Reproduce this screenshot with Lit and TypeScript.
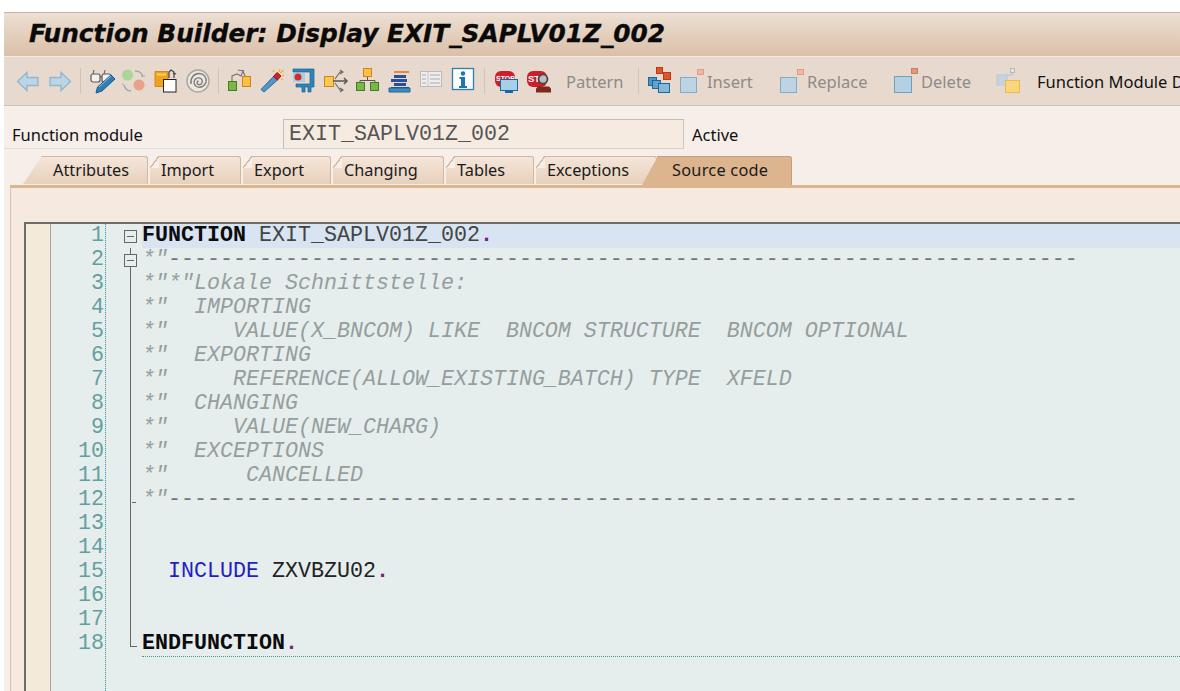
import { LitElement, html, css, svg } from "lit";
import { customElement } from "lit/decorators.js";

const ic = (body: unknown) => html`<svg class="ic" width="24" height="24" viewBox="0 0 24 24">${body}</svg>`;

const sq = (x: number, y: number, w: number, h: number, f: string, s: string) =>
  svg`<rect x=${x + 0.5} y=${y + 0.5} width=${w} height=${h} fill=${f} stroke=${s}/>`;

const icons = {
  back: svg`<path d="M1.500 12.500 11 3.500v5h11v8H11v5z" fill="#bcd5e6" stroke="#93b7d0" stroke-width="1.400"/>`,
  fwd: svg`<path d="M22.500 12.500 13 3.500v5H2v8h11v5z" fill="#bcd5e6" stroke="#93b7d0" stroke-width="1.400"/>`,
  glasses: svg`<g fill="#f4efe9" stroke="#5a5a58" stroke-width="1.200"><rect x="1" y="5" width="9" height="8" rx="2"/><rect x="12" y="5" width="9" height="8" rx="2"/></g><path d="M3 5 4 1M14 5l1-4M10 8h2" stroke="#5a5a58" fill="none"/><path d="M6 24l1.500-6L21 6l4 4L12 22z" fill="#2f7db5" stroke="#1c5a8c"/><path d="M9 18l12-11" stroke="#8cc4ea"/>`,
  states: svg`<circle cx="5.500" cy="6" r="5.500" fill="#aad49b"/><circle cx="17" cy="16" r="5.500" fill="#e9a08c"/><path d="M13 2c4 0 7 2 8 6M9 22c-4 0-6-2-7-6" fill="none" stroke="#a8a8a4" stroke-width="1.400"/><path d="M19 7h4M0 15l3 2" stroke="#a8a8a4"/>`,
  copy: svg`<path d="M1 2.500h13v15H1z" fill="#f0a21d" stroke="#d98a16"/><path d="M3 4.500h9v2H3z" fill="#f8d26c"/><rect x="9.500" y="10.500" width="12.500" height="12.500" fill="#fff" stroke="#222"/><path d="M15 9V3l2-2 3 2v6M19 4l3 1" fill="none" stroke="#444" stroke-width="1.200"/>`,
  spiral: svg`<circle cx="12" cy="12" r="11" fill="#efe6de" stroke="#a9a8a4" stroke-width="1.500"/><path d="M5 15C4 9 8 4.500 13 4.500c5 0 8 4 7 8.500-1 4-5 6-8.500 5C8 17 7 13 9 10.500c2-2.500 6-2 7 .5 1 3-1 5-3.500 4.500-2-.5-2-3 0-3.500" fill="none" stroke="#777" stroke-width="1.300"/>`,
  flow: svg`<path d="M4 12V7l5-2 4 2 2-5 2 5M10 1l6 1" fill="none" stroke="#777" stroke-width="1.200"/>${sq(0, 12, 8, 9, "#7ab648", "#3f7f22")}${sq(14, 7, 8, 10, "#f6c342", "#db7b1b")}`,
  wand: svg`<path d="M1 20.500 14 7l4 3.500L4 23z" fill="#5596c6" stroke="#2a6a9b"/><path d="M13.500 7.500l3.500-4 4 3.500-3.500 4z" fill="#d0202e" stroke="#8d1620"/><path d="M19 3l1-3M22 7l2-1M20.500 4l3-3M14 3l-1-2M23 11l-2-1" stroke="#e7b52c" stroke-width="1.300"/>`,
  clamp: svg`<path d="M1 0h21v18h-3v5h-3v-5h-3v5h-3v-5H4v-3h14V3H1z" fill="#2c86bb" stroke="#17608f" stroke-width=".7"/><path d="M1 4h12v9H1z" fill="#a7cee6"/><circle cx="6" cy="8" r="3.500" fill="#cf2e2a"/>`,
  branch: svg`${sq(0, 7, 9, 10, "#f6cc4d", "#dd7d22")}<path d="M9 12h14M20 9l3 3-3 3" fill="none" stroke="#555" stroke-width="1.500"/><path d="M11 10l5-7h3M16 1l3 2-3 2M11 14l5 7h3M16 19l3 2-3 2" fill="none" stroke="#6a6a6a" stroke-width="1.100"/>`,
  tree: svg`${sq(7, -1, 8, 8, "#f6c342", "#db7b1b")}<path d="M11.500 8v3.500M4 13v-1.500h15V13" fill="none" stroke="#555"/>${sq(0, 13, 8, 8, "#7ab648", "#3f7f22")}${sq(14, 13, 8, 8, "#7ab648", "#3f7f22")}`,
  stack: svg`<path d="M6 2h15v2H6z" fill="#e58a3c"/><path d="M6 6h12v3H6zM3 10h16v3H3zM6 14h12v3H6z" fill="#27509a"/><path d="M1 19h21v4H1z" fill="#3e8cbf" stroke="#1f6796"/><path d="M3 18h18v1H3z" fill="#27509a"/>`,
  list: svg`<rect x=".5" y="2.500" width="21" height="15" fill="#f1ece8" stroke="#b6bcc2"/><path d="M8 3v14" stroke="#c4c8cc"/><path d="M2 6h4M2 10h4M2 14h4M10 6h10M10 10h10M10 14h10" stroke="#bcc2c7" stroke-width="1.500"/>`,
  info: svg`<rect x=".5" y="-.5" width="21" height="21" fill="#fdfdfd" stroke="#2b80b3" stroke-width="1.300"/><circle cx="11" cy="4.500" r="2.200" fill="#1f76ad"/><path d="M7.500 8H13v9h2v2H7v-2h2v-7H7.500z" fill="#1f76ad"/>`,
  stop1: svg`<rect x="0" y="2" width="20" height="16" rx="6" fill="#cc1f2b"/><text x="1" y="11.500" font-family="Liberation Sans" font-weight="700" font-size="7" fill="#fff">STOP</text>${sq(5, 10, 17, 11, "#a6d0ea", "#17689d")}<path d="M10 22h8v2h-8z" fill="#17689d"/>`,
  stop2: svg`<rect x="0" y="2" width="20" height="16" rx="6" fill="#cc1f2b"/><text x="1" y="13" font-family="Liberation Sans" font-weight="700" font-size="9.500" fill="#fff">ST</text><circle cx="16" cy="10" r="4.500" fill="#bdbdbd" stroke="#444" stroke-width="1.700"/><path d="M9 23.500v-4l2-2h11l2 2v4z" fill="#7d2a1e"/>`,
  group: svg`${sq(8, -2, 6, 6, "#e0562a", "#b93a16")}${sq(15, 3, 7, 7, "#e0562a", "#b93a16")}${sq(0, 8, 8, 8, "#4d94c4", "#1f6796")}${sq(4, 11, 8, 8, "#62a3cd", "#1f6796")}${sq(10, 14, 11, 9, "#86b9d9", "#1f6796")}`,
  ins: svg`${sq(0, 8, 16, 15, "#bdd4e4", "#82abc7")}${sq(17, 0, 6, 5, "#eeb7a6", "#e39a86")}`,
  del: svg`${sq(0, 7, 17, 16, "#b4d0e3", "#6f9fbf")}${sq(17, -1, 6, 5, "#dc9a80", "#c97d64")}`,
  last: svg`${sq(0, 5, 11, 11, "#c5d2dd", "#c5d2dd")}${sq(14, -1, 4, 4, "#e8e4e2", "#aeb9c3")}<path d="M11 6h5V3" stroke="#b4bfc8" fill="none"/>${sq(9, 11, 14, 12, "#f8d67b", "#efb94d")}`,
};

const c = (t: string) => html`<i class="cm">${t}</i>`;
const dots = html`<b class="dot">.</b>`;
const dash = html`<i class="cm">*"</i><span class="dash">${"-".repeat(70)}</span>`;

const rows: [unknown, string][] = [
  [html`<b class="kw">FUNCTION</b> <span class="id">EXIT_SAPLV01Z_002</span>${dots}`, "box"],
  [dash, "boxline"],
  [c(`*"*"Lokale Schnittstelle:`), "line"],
  [c(`*"  IMPORTING`), "line"],
  [c(`*"     VALUE(X_BNCOM) LIKE  BNCOM STRUCTURE  BNCOM OPTIONAL`), "line"],
  [c(`*"  EXPORTING`), "line"],
  [c(`*"     REFERENCE(ALLOW_EXISTING_BATCH) TYPE  XFELD`), "line"],
  [c(`*"  CHANGING`), "line"],
  [c(`*"     VALUE(NEW_CHARG)`), "line"],
  [c(`*"  EXCEPTIONS`), "line"],
  [c(`*"      CANCELLED`), "line"],
  [dash, "tick"],
  ["", "line"],
  ["", "line"],
  [html`  <span class="blue">INCLUDE</span> <span class="id2">ZXVBZU02</span>${dots}`, "line"],
  ["", "line"],
  ["", "line"],
  [html`<b class="kw">ENDFUNCTION</b>${dots}`, "end"],
];

const tabs = [
  ["Attributes", "t1"],
  ["Import", "t2 sl"],
  ["Export", "t3 sl"],
  ["Changing", "t4 sl"],
  ["Tables", "t5 sl"],
  ["Exceptions", "t6 sl"],
  ["Source code", "t7 on"],
];

@customElement("app-root")
export class AppRoot extends LitElement {
  static styles = css`
    :host { display: block; width: 1180px; height: 691px; overflow: hidden; background: #fff;
      font-family: "Noto Sans", "Open Sans", sans-serif; color: #111; }
    .frame { padding: 12px 0 0 4px; height: 691px; display: flex; flex-direction: column; box-sizing: border-box; }
    .title { flex: none; height: 44px; box-sizing: border-box; border-top: 1px solid #c8b2a0; padding-bottom: 2px;
      background: linear-gradient(#ecdfd3, #dbc0a8); display: flex; align-items: center; padding-left: 25px;
      font: italic 700 24.800px "DejaVu Sans", sans-serif; color: #0a0a0a; white-space: nowrap; -webkit-text-stroke: .35px #0a0a0a; }
    .tb { flex: none; height: 50px; box-sizing: border-box; border-top: 1px solid #f4ebe4; border-bottom: 1px solid #cbc2bb;
      background: #e8d9ce; display: flex; align-items: center; padding-left: 12px; white-space: nowrap; overflow: hidden; }
    .ic { flex: none; margin-right: 8px; display: block; overflow: visible; }
    .sep { flex: none; width: 1px; height: 26px; background: #d3c4b8; margin-right: 9px; }
    .sep.w { margin-right: 10px; }
    .btn { flex: none; display: flex; align-items: center; font-size: 16.500px; color: #8d8b88; }
    .btn .ic { margin-right: 3px; }
    .pat { width: 72px; margin-left: 7px; }
    .b1 { width: 100px; } .b2 { width: 114px; } .b3 { width: 102px; }
    .b4 { width: 200px; color: #111; }
    .b4 .ic { margin-right: 17px; }
    .main { flex: 1; min-height: 0; background: #f6eee9; display: flex; flex-direction: column; }
    .fld { flex: none; height: 50px; padding-top: 13px; box-sizing: border-box; display: flex; align-items: flex-start; }
    .lbl { width: 279px; height: 30px; box-sizing: border-box; padding-left: 8px; font-size: 16.500px; line-height: 31px; border-bottom: 1px solid #e4dcd6; }
    .inp { width: 401px; height: 30px; box-sizing: border-box; background: #f6ebe1; border: 1px solid #c4bcb5; border-bottom-color: #d9cfc8;
      border-right-color: #d0c6bf; font: 21.670px/30px "Liberation Mono", monospace; color: #555; padding-left: 5px; }
    .act { margin-left: 8px; font-size: 16.500px; line-height: 31px; }
    .tabs { flex: none; height: 29px; display: flex; padding-left: 37px; }
    .tab { position: relative; height: 28px; box-sizing: border-box; border: 1px solid #d3b79e; border-left: 0; border-bottom: 0; border-radius: 0 3px 0 0;
      background: linear-gradient(#f4e6da, #e8d0bb); font-size: 16.300px; line-height: 27px; margin-right: 2px; color: #1a1a1a; }
    .sl { clip-path: polygon(8px 0, 100% 0, 100% 100%, 0 100%, 0 11px); }
    .sl::before { content: ""; position: absolute; left: 0; top: -1px; width: 9px; height: 12px;
      background: linear-gradient(to bottom right, transparent 46%, #d3b79e 46%, #d3b79e 56%, #f6eee9 56%); }
    .t1::before { content: ""; position: absolute; left: -18px; top: -1px; width: 19px; height: 28px;
      background: linear-gradient(#f4e6da, #e8d0bb); clip-path: polygon(100% 0, 100% 100%, 0 100%); }
    .t1 { width: 107px; padding-left: 12px; }
    .t2 { width: 91px; padding-left: 11px; }
    .t3 { width: 88px; padding-left: 11px; }
    .t4 { width: 111px; padding-left: 11px; }
    .t5 { width: 88px; padding-left: 11px; }
    .t6 { width: 121px; padding-left: 11px; margin-right: 0; }
    .t7 { width: 135px; padding-left: 15px; }
    .tab.on { background: #dcb48e; border-color: #c89f78; z-index: 1; height: 29px; font-size: 16.300px; letter-spacing: .27px; }
    .tab.on::before { content: ""; position: absolute; top: -1px; left: -15px; width: 16px; height: 29px; background: #dcb48e;
      clip-path: polygon(100% 0, 100% 100%, 0 100%); }
    .panel { flex: 1; min-height: 0; margin-left: 6px; background: #f6e9e0; border-top: 3px solid #dcb48e; border-left: 1px solid #e4bfa8; padding: 34px 0 0 13px; display: flex; }
    .ed { flex: 1; min-width: 0; background: #e6eeed; border-top: 2px solid #6d6d6a; border-left: 2px solid #6d6d6a; display: flex; }
    .gut { flex: none; width: 25px; box-sizing: border-box; background: #f3eada; border-right: 1px solid #aaa598; }
    .nums { flex: none; width: 54px; border-right: 1px dotted #3f9a98; font: 21.670px/24px "Liberation Mono", monospace; color: #639fa1; text-align: right; }
    .nums div { height: 24px; margin-right: 1px; }
    .fold { flex: none; width: 36px; }
    .fold div { height: 24px; position: relative; }
    .fold .line::before, .fold .tick::before, .fold .boxline::before { content: ""; position: absolute; left: 24px; top: 0; bottom: 0; width: 1px; background: #666; }
    .fold .end::before { content: ""; position: absolute; left: 24px; top: 0; height: 14px; width: 6px; border-left: 1px solid #666; border-bottom: 1px solid #666; }
    .fold .tick::after { content: ""; position: absolute; left: 26px; top: 14px; width: 4px; height: 1px; background: #666; }
    .box::after, .boxline::after { content: ""; position: absolute; left: 18px; top: 6px; width: 11px; height: 11px; border: 1px solid #666;
      background: linear-gradient(#666, #666) center / 7px 1px no-repeat #e6eeed; }
    .code { flex: 1; min-width: 0; font: 21.670px/24px "Liberation Mono", monospace; white-space: pre; color: #333; }
    .code div { height: 24px; }
    .code .r1 { background: #d8e4f2; }
    .code .r18 { border-bottom: 1px dotted #3f9a98; height: 25px; box-sizing: border-box; }
    .kw { color: #0c0c0c; font-weight: 700; }
    .id { color: #444; }
    .id2 { color: #222; }
    .blue { color: #1f1fc4; }
    .dot { color: #7c1a80; font-weight: 700; }
    .cm { color: #959e9d; font-style: italic; }
    .dash { color: #6f7776; }
  `;

  render() {
    const I = icons;
    return html`<div class="frame">
      <div class="title">Function Builder: Display EXIT_SAPLV01Z_002</div>
      <div class="tb">
        ${ic(I.back)}${ic(I.fwd)}<span class="sep"></span>
        ${ic(I.glasses)}${ic(I.states)}${ic(I.copy)}${ic(I.spiral)}<span class="sep"></span>
        ${ic(I.flow)}${ic(I.wand)}${ic(I.clamp)}${ic(I.branch)}${ic(I.tree)}${ic(I.stack)}${ic(I.list)}${ic(I.info)}<span class="sep w"></span>
        ${ic(I.stop1)}${ic(I.stop2)}
        <span class="btn pat">Pattern</span><span class="sep"></span>
        ${ic(I.group)}
        <span class="btn b1">${ic(I.ins)}Insert</span>
        <span class="btn b2">${ic(I.ins)}Replace</span>
        <span class="btn b3">${ic(I.del)}Delete</span>
        <span class="btn b4">${ic(I.last)}Function Module D</span>
      </div>
      <div class="main">
        <div class="fld">
          <div class="lbl">Function module</div>
          <div class="inp">EXIT_SAPLV01Z_002</div>
          <div class="act">Active</div>
        </div>
        <div class="tabs">
          ${tabs.map(([t, k]) => html`<div class="tab ${k}">${t}</div>`)}
        </div>
        <div class="panel">
          <div class="ed">
            <div class="gut"></div>
            <div class="nums">${rows.map((_, i) => html`<div>${i + 1}</div>`)}</div>
            <div class="fold">${rows.map((r) => html`<div class=${r[1]}></div>`)}</div>
            <div class="code">${rows.map((r, i) => html`<div class="r${i + 1}">${r[0]}</div>`)}</div>
          </div>
        </div>
      </div>
    </div>`;
  }
}
